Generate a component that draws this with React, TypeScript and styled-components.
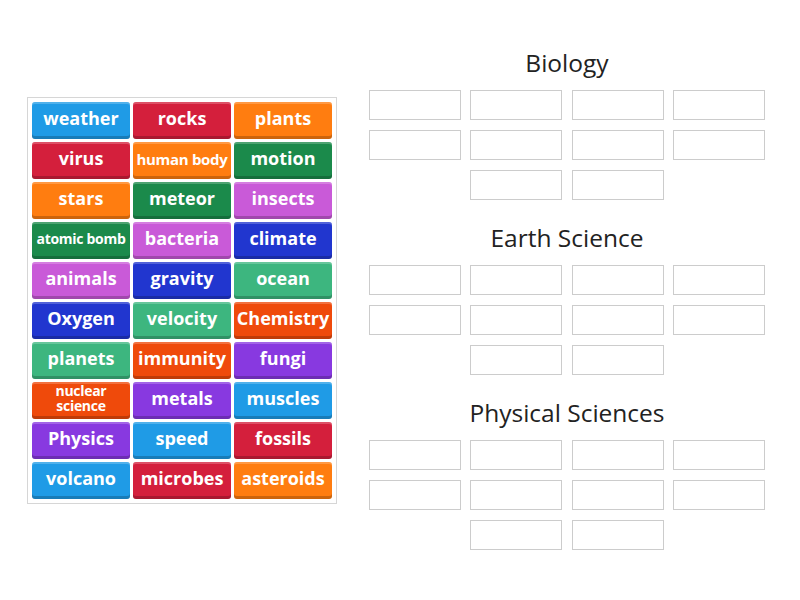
import styled, { createGlobalStyle } from "styled-components";

const GlobalStyle = createGlobalStyle`
  html, body {
    margin: 0;
    padding: 0;
    background: #ffffff;
  }
  body {
    font-family: "Open Sans", "Liberation Sans", sans-serif;
  }
`;

const colors = {
  blue: "#1f9be6",
  red: "#d41f3c",
  orange: "#ff7d10",
  green: "#1b8a4b",
  lilac: "#c95ad8",
  navy: "#2136cf",
  teal: "#3db67f",
  purple: "#8839e0",
  ember: "#ef4a0b",
};

type Color = keyof typeof colors;

interface Word {
  text: string;
  color: Color;
  size?: number;
}

const words: Word[] = [
  { text: "weather", color: "blue" },
  { text: "rocks", color: "red" },
  { text: "plants", color: "orange" },
  { text: "virus", color: "red" },
  { text: "human body", color: "orange", size: 15 },
  { text: "motion", color: "green" },
  { text: "stars", color: "orange" },
  { text: "meteor", color: "green" },
  { text: "insects", color: "lilac" },
  { text: "atomic bomb", color: "green", size: 14 },
  { text: "bacteria", color: "lilac" },
  { text: "climate", color: "navy" },
  { text: "animals", color: "lilac" },
  { text: "gravity", color: "navy" },
  { text: "ocean", color: "teal" },
  { text: "Oxygen", color: "navy" },
  { text: "velocity", color: "teal" },
  { text: "Chemistry", color: "ember" },
  { text: "planets", color: "teal" },
  { text: "immunity", color: "ember" },
  { text: "fungi", color: "purple" },
  { text: "nuclear science", color: "ember", size: 14 },
  { text: "metals", color: "purple" },
  { text: "muscles", color: "blue" },
  { text: "Physics", color: "purple" },
  { text: "speed", color: "blue" },
  { text: "fossils", color: "red" },
  { text: "volcano", color: "blue" },
  { text: "microbes", color: "red" },
  { text: "asteroids", color: "orange" },
];

const sections = ["Biology", "Earth Science", "Physical Sciences"];

const Page = styled.div`
  display: flex;
  align-items: flex-start;
  width: 800px;
  height: 600px;
  box-sizing: border-box;
  padding: 45px 0 0 27px;
`;

const WordBank = styled.div`
  margin-top: 52px;
  display: grid;
  grid-template-columns: repeat(3, 98px);
  grid-auto-rows: 37px;
  gap: 3px;
  padding: 4px;
  border: 1px solid #d6d6d6;
`;

const Tile = styled.div<{ $color: Color; $size?: number }>`
  display: flex;
  align-items: center;
  justify-content: center;
  text-align: center;
  border-radius: 3px;
  background: ${(p) => colors[p.$color]};
  box-shadow: inset 0 2px 0 rgba(255, 255, 255, 0.22),
    inset 0 -3px 0 rgba(0, 0, 0, 0.2);
  color: #ffffff;
  font-weight: 700;
  font-size: ${(p) => p.$size ?? 18}px;
  line-height: ${(p) => (p.$size === 14 ? 1.05 : 1.2)};
  letter-spacing: ${(p) => (p.$size ? "-0.3px" : "0")};
  padding: 0 1px 3px;
  white-space: ${(p) => (p.$size === 15 ? "nowrap" : "normal")};
`;

const Groups = styled.div`
  margin-left: 32px;
  display: flex;
  flex-direction: column;
  gap: 20px;
`;

const Group = styled.section`
  display: flex;
  flex-direction: column;
  align-items: center;
`;

const Title = styled.h2`
  margin: 0 0 9px;
  height: 36px;
  line-height: 36px;
  font-size: 24.5px;
  font-weight: 400;
  color: #222222;
`;

const Slots = styled.div`
  display: grid;
  grid-template-columns: repeat(4, 92px);
  grid-auto-rows: 30px;
  column-gap: 9.33px;
  row-gap: 10px;
`;

const Slot = styled.div<{ $col?: number }>`
  box-sizing: border-box;
  border: 1px solid #cccccc;
  background: #ffffff;
  ${(p) => (p.$col ? `grid-column: ${p.$col};` : "")}
`;

export default function App() {
  return (
    <>
      <GlobalStyle />
      <Page>
        <WordBank>
          {words.map((w) => (
            <Tile key={w.text} $color={w.color} $size={w.size}>
              {w.text}
            </Tile>
          ))}
        </WordBank>
        <Groups>
          {sections.map((name) => (
            <Group key={name}>
              <Title>{name}</Title>
              <Slots>
                {Array.from({ length: 8 }).map((_, i) => (
                  <Slot key={i} />
                ))}
                <Slot $col={2} />
                <Slot $col={3} />
              </Slots>
            </Group>
          ))}
        </Groups>
      </Page>
    </>
  );
}
